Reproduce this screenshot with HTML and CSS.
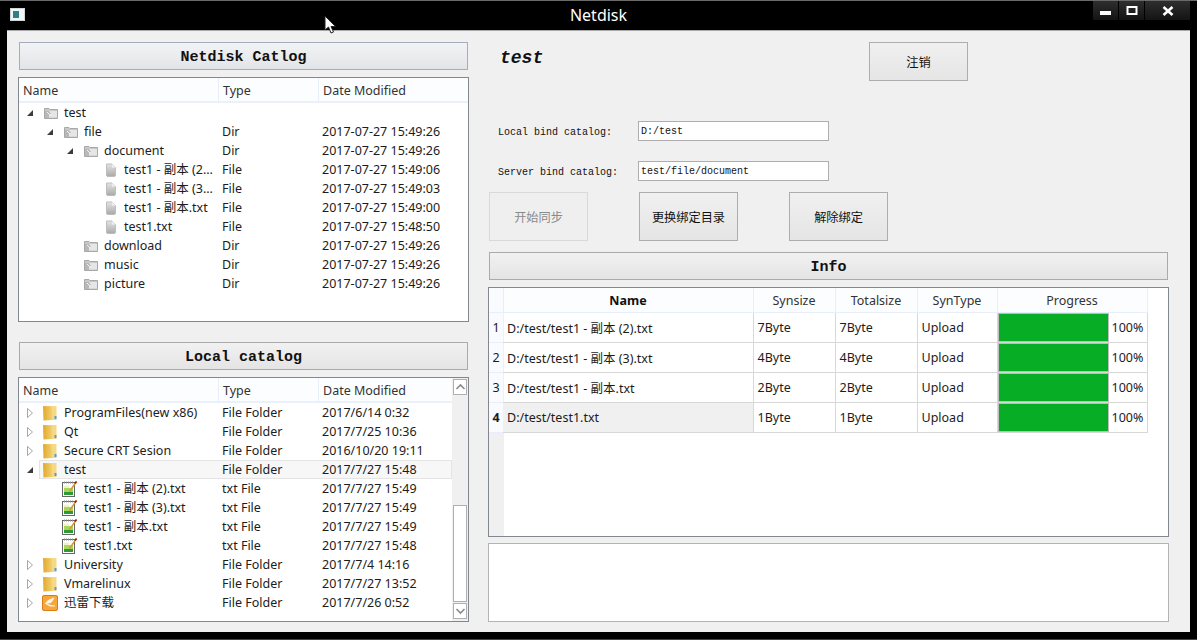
FILE: index.html
```html
<!DOCTYPE html>
<html>
<head>
  <title>Netdisk</title>
  <link rel="stylesheet" href="styles.css">
</head>
<body>
  <svg class="defs" width="0" height="0">
    <defs>
      <linearGradient id="file-fill" x1="0" y1="0" x2="0" y2="1"><stop offset="0" stop-color="#e4e4e4"/><stop offset="1" stop-color="#a9a9a9"/></linearGradient>
      <linearGradient id="folder-gold" x1="0" y1="0" x2="1" y2="0"><stop offset="0" stop-color="#e0a92c"/><stop offset="1" stop-color="#f3d272"/></linearGradient>
    </defs>
    <symbol id="open" viewBox="0 0 10 10"><path d="M8 2 V8 H2 Z" fill="#3c3c3c"/></symbol>
    <symbol id="closed" viewBox="0 0 10 10"><path d="M2.5 0.5 L7.5 5 L2.5 9.5 Z" fill="#fff" stroke="#a6a6a6"/></symbol>
    <symbol id="gray-folder" viewBox="0 0 14 12">
      <path d="M0.5 1.5 H5 L6 2.5 H13.5 V11.5 H0.5 Z" fill="#c9c9c9" stroke="#a8a8a8"/>
      <rect x="2" y="4" width="11" height="6.5" fill="#e6e6e6"/>
      <path d="M1 4 H5 L7 7 H5 V11 H1 Z" fill="#b8b8b8"/>
      <path d="M3 5 L6 8" stroke="#f5f5f5"/>
    </symbol>
    <symbol id="gray-file" viewBox="0 0 14 14">
      <path d="M2.5 1 H8 L11.5 4.5 V12 Q11.5 13.5 10 13.5 H4 Q2.5 13.5 2.5 12 Z" fill="url(#file-fill)" stroke="#bdbdbd"/>
      <path d="M8 1 V4.5 H11.5 Z" fill="#f2f2f2"/>
    </symbol>
    <symbol id="yellow-folder" viewBox="0 0 14 16">
      <path d="M2 1 H13.5 V15 H2 Z" fill="#f5d983"/>
      <path d="M0 1 L8.5 1.5 L9.5 15 L0.5 15.5 Z" fill="url(#folder-gold)"/>
      <rect x="11.5" y="11" width="2" height="3" fill="#4e9fd8"/>
    </symbol>
    <symbol id="note" viewBox="0 0 16 16">
      <rect x="0.5" y="1.5" width="12" height="14" fill="#fff" stroke="#666"/>
      <path d="M2 1.5 H11" stroke="#888" stroke-dasharray="1 1" stroke-width="2"/>
      <path d="M2 7 H11 V14 H2 Z" fill="#a8d65c"/>
      <path d="M2 11 H11 V14 H2 Z" fill="#2d9a37"/>
      <path d="M2 4.5 H7 V7 H2 Z" fill="#f0f0c8"/>
      <path d="M7.5 10.5 L14.5 0.5" stroke="#d9982e" stroke-width="1.5"/>
      <path d="M13 2.5 L14.5 0.5" stroke="#a4161a" stroke-width="1.5"/>
    </symbol>
    <symbol id="xunlei" viewBox="0 0 16 16">
      <rect x="0.5" y="0.5" width="15" height="15" rx="1.5" fill="#f6a63a" stroke="#d97d16"/>
      <path d="M12 3 L6 5.5 L3.5 8.5 L9 7.5 Z M3.5 8.5 L8 11 L13 11" fill="#fff4dc" stroke="#fff4dc"/>
    </symbol>
  </svg>

  <div class="titlebar">
    <div class="app-icon"><span></span></div>
    <div class="title">Netdisk</div>
    <div class="win-btns">
      <div class="win-btn w-min"><svg width="12" height="10"><rect x="0" y="5" width="11" height="4" fill="#fff"/></svg></div>
      <div class="win-btn w-max"><svg width="12" height="10"><rect x="1.5" y="1" width="9" height="7" fill="none" stroke="#fff" stroke-width="2"/></svg></div>
      <div class="win-btn w-close"><svg width="12" height="10"><path d="M1.5 1 L10.5 9 M10.5 1 L1.5 9" stroke="#fff" stroke-width="2.6"/></svg></div>
    </div>
  </div>

  <div class="content">
    <div class="left">
      <div class="bar bar-blue">Netdisk Catlog</div>
      <div class="tree">
        <div class="tree-main">
          <div class="row head"><div>Name</div><div>Type</div><div>Date Modified</div></div>
          <div class="row"><div class="name lv0"><svg class="arr"><use href="#open"/></svg><svg class="ico ico-f"><use href="#gray-folder"/></svg>test</div><div></div><div></div></div>
          <div class="row"><div class="name lv1"><svg class="arr"><use href="#open"/></svg><svg class="ico ico-f"><use href="#gray-folder"/></svg>file</div><div>Dir</div><div>2017-07-27 15:49:26</div></div>
          <div class="row"><div class="name lv2"><svg class="arr"><use href="#open"/></svg><svg class="ico ico-f"><use href="#gray-folder"/></svg>document</div><div>Dir</div><div>2017-07-27 15:49:26</div></div>
          <div class="row"><div class="name lv3"><span class="arr"></span><svg class="ico"><use href="#gray-file"/></svg>test1 - 副本 (2...</div><div>File</div><div>2017-07-27 15:49:06</div></div>
          <div class="row"><div class="name lv3"><span class="arr"></span><svg class="ico"><use href="#gray-file"/></svg>test1 - 副本 (3...</div><div>File</div><div>2017-07-27 15:49:03</div></div>
          <div class="row"><div class="name lv3"><span class="arr"></span><svg class="ico"><use href="#gray-file"/></svg>test1 - 副本.txt</div><div>File</div><div>2017-07-27 15:49:00</div></div>
          <div class="row"><div class="name lv3"><span class="arr"></span><svg class="ico"><use href="#gray-file"/></svg>test1.txt</div><div>File</div><div>2017-07-27 15:48:50</div></div>
          <div class="row"><div class="name lv2"><span class="arr"></span><svg class="ico ico-f"><use href="#gray-folder"/></svg>download</div><div>Dir</div><div>2017-07-27 15:49:26</div></div>
          <div class="row"><div class="name lv2"><span class="arr"></span><svg class="ico ico-f"><use href="#gray-folder"/></svg>music</div><div>Dir</div><div>2017-07-27 15:49:26</div></div>
          <div class="row"><div class="name lv2"><span class="arr"></span><svg class="ico ico-f"><use href="#gray-folder"/></svg>picture</div><div>Dir</div><div>2017-07-27 15:49:26</div></div>
        </div>
      </div>

      <div class="bar bar-second">Local catalog</div>
      <div class="tree">
        <div class="tree-main">
          <div class="row head"><div>Name</div><div>Type</div><div>Date Modified</div></div>
          <div class="row"><div class="name lv0"><svg class="arr"><use href="#closed"/></svg><svg class="ico ico-y"><use href="#yellow-folder"/></svg>ProgramFiles(new x86)</div><div>File Folder</div><div>2017/6/14 0:32</div></div>
          <div class="row"><div class="name lv0"><svg class="arr"><use href="#closed"/></svg><svg class="ico ico-y"><use href="#yellow-folder"/></svg>Qt</div><div>File Folder</div><div>2017/7/25 10:36</div></div>
          <div class="row"><div class="name lv0"><svg class="arr"><use href="#closed"/></svg><svg class="ico ico-y"><use href="#yellow-folder"/></svg>Secure CRT Sesion</div><div>File Folder</div><div>2016/10/20 19:11</div></div>
          <div class="row sel"><div class="name lv0"><svg class="arr"><use href="#open"/></svg><svg class="ico ico-y"><use href="#yellow-folder"/></svg>test</div><div>File Folder</div><div>2017/7/27 15:48</div></div>
          <div class="row"><div class="name lv1"><span class="arr"></span><svg class="ico ico-n"><use href="#note"/></svg>test1 - 副本 (2).txt</div><div>txt File</div><div>2017/7/27 15:49</div></div>
          <div class="row"><div class="name lv1"><span class="arr"></span><svg class="ico ico-n"><use href="#note"/></svg>test1 - 副本 (3).txt</div><div>txt File</div><div>2017/7/27 15:49</div></div>
          <div class="row"><div class="name lv1"><span class="arr"></span><svg class="ico ico-n"><use href="#note"/></svg>test1 - 副本.txt</div><div>txt File</div><div>2017/7/27 15:49</div></div>
          <div class="row"><div class="name lv1"><span class="arr"></span><svg class="ico ico-n"><use href="#note"/></svg>test1.txt</div><div>txt File</div><div>2017/7/27 15:48</div></div>
          <div class="row"><div class="name lv0"><svg class="arr"><use href="#closed"/></svg><svg class="ico ico-y"><use href="#yellow-folder"/></svg>University</div><div>File Folder</div><div>2017/7/4 14:16</div></div>
          <div class="row"><div class="name lv0"><svg class="arr"><use href="#closed"/></svg><svg class="ico ico-y"><use href="#yellow-folder"/></svg>Vmarelinux</div><div>File Folder</div><div>2017/7/27 13:52</div></div>
          <div class="row"><div class="name lv0"><svg class="arr"><use href="#closed"/></svg><svg class="ico ico-n"><use href="#xunlei"/></svg>迅雷下载</div><div>File Folder</div><div>2017/7/26 0:52</div></div>
        </div>
        <div class="scroll">
          <div class="sb-btn"><svg width="11" height="8"><path d="M1.5 6 L5.5 2 L9.5 6" fill="none" stroke="#8a8a8a" stroke-width="1.6"/></svg></div>
          <div class="sb-track"><div class="sb-thumb"></div></div>
          <div class="sb-btn"><svg width="11" height="8"><path d="M1.5 2 L5.5 6 L9.5 2" fill="none" stroke="#8a8a8a" stroke-width="1.6"/></svg></div>
        </div>
      </div>
    </div>

    <div class="right">
      <div class="user-row">
        <div class="user">test</div>
        <button class="btn btn-logout">注销</button>
      </div>

      <div class="field field-first">
        <label>Local bind catalog:</label>
        <div class="input">D:/test</div>
      </div>
      <div class="field field-second">
        <label>Server bind catalog:</label>
        <div class="input">test/file/document</div>
      </div>

      <div class="actions">
        <button class="btn btn-big btn-off">开始同步</button>
        <button class="btn btn-big">更换绑定目录</button>
        <button class="btn btn-big">解除绑定</button>
      </div>

      <div class="bar bar-second bar-info">Info</div>

      <div class="table-box">
        <table>
          <thead>
            <tr><th class="rh"></th><th class="c-name">Name</th><th class="c-size">Synsize</th><th class="c-size">Totalsize</th><th class="c-type">SynType</th><th class="c-prog">Progress</th></tr>
          </thead>
          <tbody>
            <tr><td class="rh">1</td><td>D:/test/test1 - 副本 (2).txt</td><td>7Byte</td><td>7Byte</td><td>Upload</td><td class="prog"><div class="prog-in"><div class="prog-bar"></div>100%</div></td></tr>
            <tr><td class="rh">2</td><td>D:/test/test1 - 副本 (3).txt</td><td>4Byte</td><td>4Byte</td><td>Upload</td><td class="prog"><div class="prog-in"><div class="prog-bar"></div>100%</div></td></tr>
            <tr><td class="rh">3</td><td>D:/test/test1 - 副本.txt</td><td>2Byte</td><td>2Byte</td><td>Upload</td><td class="prog"><div class="prog-in"><div class="prog-bar"></div>100%</div></td></tr>
            <tr><td class="rh rh-cur">4</td><td class="cur">D:/test/test1.txt</td><td>1Byte</td><td>1Byte</td><td>Upload</td><td class="prog"><div class="prog-in"><div class="prog-bar"></div>100%</div></td></tr>
          </tbody>
        </table>
      </div>

      <div class="log"></div>
    </div>
  </div>

  <svg class="cursor" width="13" height="20" viewBox="0 0 13 20"><path d="M1 1 V15 L4.5 12 L7 18 L9.5 17 L7 11.5 H11.5 Z" fill="#fff" stroke="#222"/></svg>
</body>
</html>
```

FILE: styles.css
```css
* {
  box-sizing: border-box;
}
html, body {
  margin: 0;
  height: 640px;
  overflow: hidden;
}
body {
  background: #000;
  font-family: "Noto Sans", "Noto Sans CJK SC", sans-serif;
  font-size: 12.5px;
  color: #1c1c1c;
  border-top: 1px solid #6a6a6a;
  border-bottom: 1px solid #444;
}
.defs {
  position: absolute;
}

.titlebar {
  height: 29px;
  display: grid;
  grid-template-columns: 1fr auto 1fr;
  color: #fff;
}
.app-icon {
  width: 15px;
  height: 13px;
  margin: 7px 0 0 10px;
  background: #f4f6f6;
  border: 1px solid #cfd6d8;
  padding: 2px;
}
.app-icon span {
  display: block;
  width: 6px;
  height: 7px;
  background: #2f7f8f;
}
.title {
  font-size: 16px;
  line-height: 28px;
}
.win-btns {
  display: flex;
  justify-content: flex-end;
  gap: 1px;
  margin-right: 7px;
  height: 19px;
}
.win-btn {
  height: 19px;
  background: linear-gradient(#2e2e2e, #141414);
  display: flex;
  align-items: center;
  justify-content: center;
}
.w-min, .w-max {
  width: 25px;
}
.w-close {
  width: 45px;
}

.content {
  margin: 0 7px;
  height: 602px;
  background: #f0f0f0;
  border-top: 1px solid #a8a8a8;
  padding: 11px 21px 0 11px;
  display: grid;
  grid-template-columns: 451px 681px;
  column-gap: 19px;
}

.bar {
  height: 28px;
  margin: 0 1px 7px;
  border: 1px solid #aaa;
  background: linear-gradient(#f1f1f1, #e4e4e4);
  font-family: "Liberation Mono", monospace;
  font-weight: bold;
  font-size: 15px;
  line-height: 30px;
  text-align: center;
  color: #111;
}
.bar-blue {
  border-color: #a3adbb;
  background: linear-gradient(#f2f3f4, #e2e5e8);
}
.bar-second {
  margin-top: 20px;
}
.bar-info {
  margin-top: 11px;
}

.tree {
  height: 245px;
  border: 1px solid #828790;
  background: #fff;
  display: flex;
  overflow: hidden;
}
.tree-main {
  flex: 1;
  min-width: 0;
}
.row {
  display: grid;
  grid-template-columns: 203px 100px 1fr;
  height: 19px;
  line-height: 19px;
  white-space: nowrap;
  position: relative;
  isolation: isolate;
}
.row.head {
  grid-template-columns: 200px 100px 1fr;
  height: 25px;
  line-height: 25px;
  background: #fcfdff;
  border-bottom: 2px solid #eaf1fb;
  color: #333;
}
.row.head > div {
  padding-left: 4px;
  border-right: 1px solid #e8effa;
}
.row.head > div:last-child {
  border-right: 0;
}
.row > .name {
  display: flex;
  align-items: center;
}
.sel::before {
  content: "";
  position: absolute;
  z-index: -1;
  left: 20px;
  right: 0;
  top: 0;
  bottom: 0;
  background: #f7f7f7;
  border: 1px solid #e4e4e4;
}
.lv0 { padding-left: 6px; }
.lv1 { padding-left: 26px; }
.lv2 { padding-left: 46px; }
.lv3 { padding-left: 66px; }
.arr {
  flex: none;
  display: block;
  width: 10px;
  height: 10px;
  margin-right: 9px;
}
.ico {
  flex: none;
  width: 14px;
  height: 14px;
  margin-right: 6px;
}
.ico-f {
  height: 12px;
}
.ico-y {
  height: 16px;
  margin-left: -1px;
  margin-right: 7px;
}
.ico-n {
  width: 16px;
  height: 16px;
  margin-left: -2px;
}

.scroll {
  width: 16px;
  background: #f0f0f0;
  display: flex;
  flex-direction: column;
  gap: 1px;
  padding: 1px 1px 2px;
}
.sb-btn {
  height: 16px;
  background: #fff;
  border: 1px solid #b0b0b0;
  display: flex;
  align-items: center;
  justify-content: center;
}
.sb-track {
  flex: 1;
  display: flex;
  flex-direction: column;
  justify-content: flex-end;
}
.sb-thumb {
  height: 97px;
  background: #fff;
  border: 1px solid #b0b0b0;
}

.right {
  display: flex;
  flex-direction: column;
}
.user-row {
  display: grid;
  grid-template-columns: 381px 99px;
  height: 39px;
}
.user {
  padding: 6px 0 0 12px;
  font-family: "Liberation Mono", monospace;
  font-style: italic;
  font-weight: bold;
  font-size: 18px;
  color: #111;
}
.btn {
  width: 99px;
  height: 39px;
  padding: 0;
  border: 1px solid #adadad;
  background: linear-gradient(#f0f0f0, #e5e5e5);
  font-family: "Noto Sans CJK SC", sans-serif;
  font-size: 12.2px;
  color: #111;
}
.btn-big {
  height: 49px;
}
.btn-off {
  color: #8a8a8a;
  border-color: #d9d9d9;
  background: #efefef;
}
.field {
  display: grid;
  grid-template-columns: 150px 191px;
  align-items: center;
  height: 20px;
}
.field-first {
  margin-top: 40px;
}
.field-second {
  margin-top: 20px;
}
.field label {
  padding: 3px 0 0 10px;
  font-family: "Liberation Mono", monospace;
  font-size: 10px;
  color: #111;
}
.input {
  height: 20px;
  border: 1px solid #adadad;
  background: #fff;
  padding-left: 2px;
  font-family: "Liberation Mono", monospace;
  font-size: 10px;
  line-height: 20px;
  color: #111;
}
.actions {
  display: flex;
  gap: 51px;
  margin: 11px 0 0 1px;
}

.table-box {
  height: 250px;
  border: 1px solid #828790;
  background: linear-gradient(90deg, #f0f0f0 15px, #fff 15px);
}
table {
  border-collapse: collapse;
  table-layout: fixed;
  width: 658px;
}
th {
  height: 24px;
  padding: 1px 0 0;
  background: #fcfdff;
  border-right: 1px solid #e8effa;
  border-bottom: 1px solid #e8effa;
  font-weight: normal;
  color: #333;
}
th.c-name {
  font-weight: bold;
  color: #111;
}
.rh {
  width: 14px;
  background: #f9fbff;
  text-align: center;
  padding: 0;
}
.c-name { width: 250px; }
.c-size { width: 82px; }
.c-type { width: 80px; }
.c-prog { width: 150px; }
td {
  height: 30px;
  padding: 0 0 0 4px;
  border-right: 1px solid #d8d8d8;
  border-bottom: 1px solid #d8d8d8;
  white-space: nowrap;
  overflow: hidden;
}
td.rh {
  border-right: 0;
  border-bottom: 1px solid #e8effa;
  padding: 0;
}
.rh-cur {
  font-weight: bold;
}
td.cur {
  background: #f0f0f0;
}
td.prog {
  padding: 0;
}
.prog-in {
  display: flex;
  align-items: center;
  gap: 3px;
  height: 29px;
}
.prog-bar {
  width: 111px;
  height: 29px;
  margin-left: 0;
  background: #07ae25;
  border: 1px solid #bdbdbd;
}

.log {
  height: 79px;
  margin-top: 6px;
  border: 1px solid #b4b4b4;
  background: #fff;
}

.cursor {
  position: absolute;
  left: 324px;
  top: 15px;
}
```
